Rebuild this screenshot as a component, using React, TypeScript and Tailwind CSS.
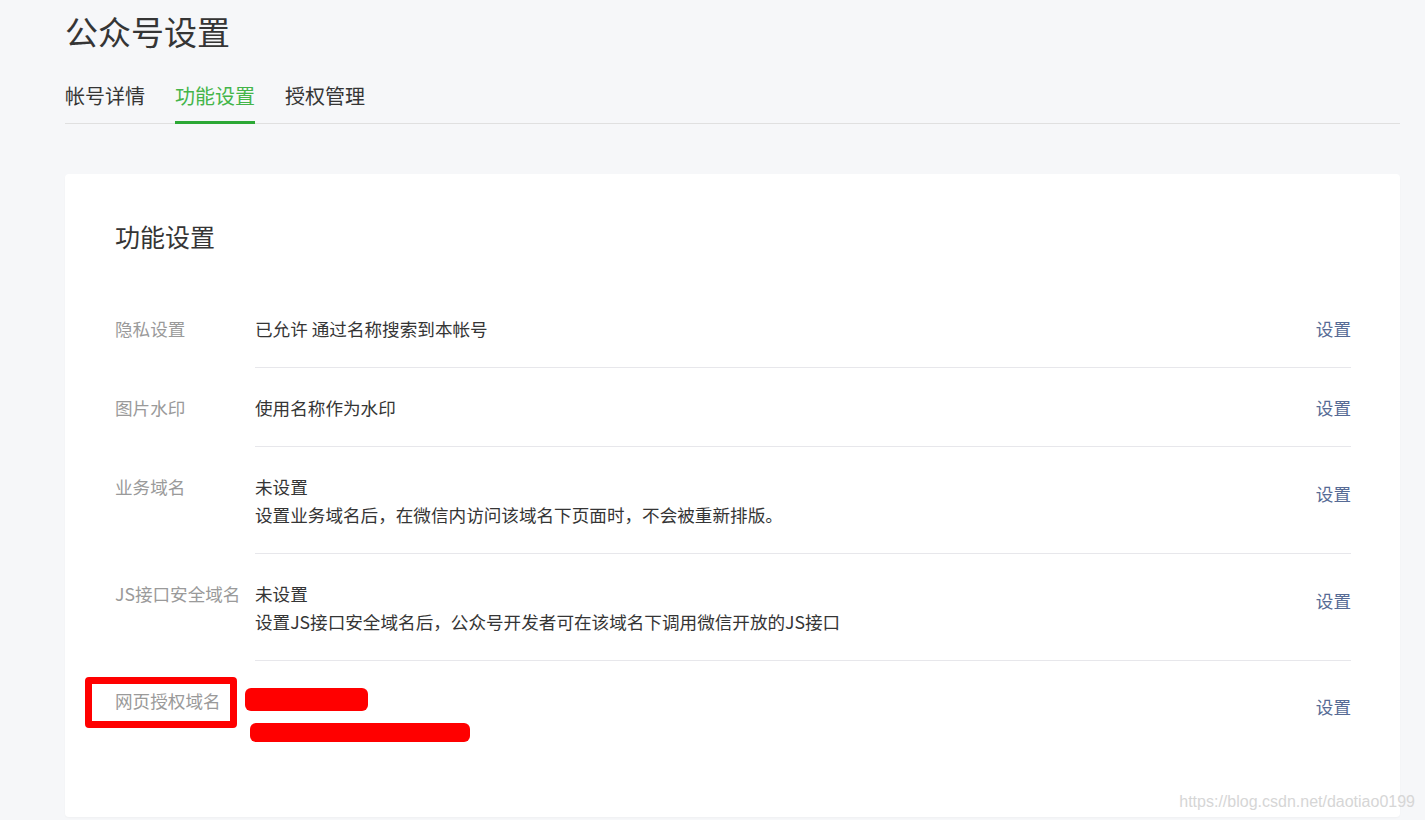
import * as React from "react";

interface SettingRowProps {
  label: string;
  lines?: string[];
  redacted?: boolean;
  highlight?: boolean;
  last?: boolean;
}

function SettingRow({ label, lines = [], redacted, highlight, last }: SettingRowProps) {
  const twoLine = lines.length > 1 || redacted;
  return (
    <div className="flex">
      {/* Label */}
      <div className="relative w-[140px] shrink-0 pt-[26px] leading-[28px] text-[#9a9a9a]">
        {label}
        {highlight && (
          <div className="absolute left-[-30px] top-[16px] w-[152px] h-[51px] border-[7px] border-[#ff0000] rounded-[4px]" />
        )}
      </div>

      {/* Content */}
      <div
        className={`flex-1 flex items-center justify-between pt-[26px] pb-[24px] ${
          last ? "" : "border-b border-[#e7e7eb]"
        }`}
      >
        <div className="leading-[28px] text-[#353535]">
          {redacted ? (
            <div className="flex flex-col">
              <div className="w-[123px] h-[23px] bg-[#ff0000] rounded-[6px] ml-[-10px] mt-[1px] mb-[12px]" />
              <div className="w-[220px] h-[19px] bg-[#ff0000] rounded-[6px] ml-[-5px] mb-[-2px]" />
            </div>
          ) : (
            lines.map((l) => <div key={l}>{l}</div>)
          )}
        </div>
        <a className={`text-[#576b95] leading-[28px] cursor-pointer ${twoLine ? "mb-[14px]" : ""}`}>设置</a>
      </div>
    </div>
  );
}

export default function App() {
  return (
    <div
      className="min-h-[820px] bg-[#f6f7f9] pl-[65px] pr-[25px] pt-[11px] text-[17.6px] overflow-hidden relative"
      style={{ fontFamily: '"Noto Sans CJK SC", "Noto Sans", sans-serif' }}
    >
      {/* Page title */}
      <h1 className="text-[33px] leading-[40px] text-[#353535] font-normal">公众号设置</h1>

      {/* Tabs */}
      <div className="flex gap-[30px] mt-[31px] border-b border-[#e0e0e0] text-[20px] leading-[28px]">
        <div className="pb-[11px] text-[#353535] mb-[-1px] border-b-[3px] border-transparent">帐号详情</div>
        <div className="pb-[11px] text-[#44b549] mb-[-1px] border-b-[3px] border-[#2ca836]">功能设置</div>
        <div className="pb-[11px] text-[#353535] mb-[-1px] border-b-[3px] border-transparent">授权管理</div>
      </div>

      {/* Card */}
      <div className="mt-[50px] bg-white rounded-[4px] pl-[50px] pr-[49px] pt-[48px] pb-[53px] shadow-[0_1px_2px_rgba(0,0,0,0.03)]">
        <h2 className="text-[25px] leading-[28px] text-[#353535] font-normal mb-[39px]">功能设置</h2>

        <SettingRow label="隐私设置" lines={["已允许 通过名称搜索到本帐号"]} />
        <SettingRow label="图片水印" lines={["使用名称作为水印"]} />
        <SettingRow
          label="业务域名"
          lines={["未设置", "设置业务域名后，在微信内访问该域名下页面时，不会被重新排版。"]}
        />
        <SettingRow
          label="JS接口安全域名"
          lines={["未设置", "设置JS接口安全域名后，公众号开发者可在该域名下调用微信开放的JS接口"]}
        />
        <SettingRow label="网页授权域名" redacted highlight last />
      </div>

      {/* Watermark */}
      <div
        className="absolute right-[10px] bottom-[8px] text-[16px] text-[#d6d6d6] leading-[20px]"
        style={{ fontFamily: '"Liberation Sans", Arial, sans-serif' }}
      >
        https://blog.csdn.net/daotiao0199
      </div>
    </div>
  );
}
